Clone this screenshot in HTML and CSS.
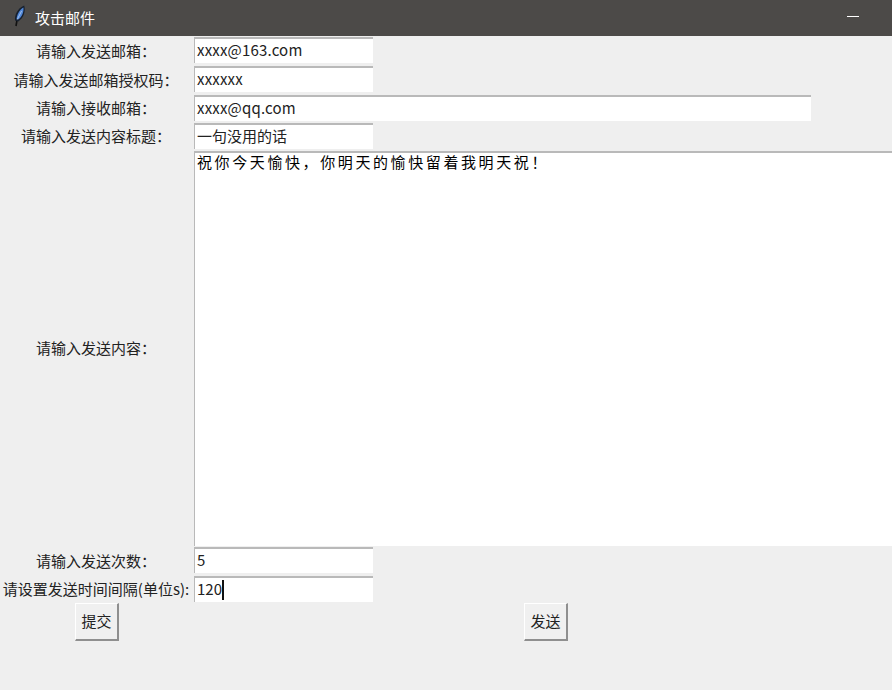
FILE: index.html
```html
<!DOCTYPE html>
<html lang="zh">
<head>
<meta charset="utf-8">
<title>攻击邮件</title>
<link rel="stylesheet" href="styles.css">
</head>
<body>
<header class="titlebar">
  <svg class="feather" width="12" height="22" viewBox="0 0 12 22" aria-hidden="true">
    <path d="M2 21 L3.2 14" stroke="#111" stroke-width="1.6" fill="none"/>
    <path d="M1 15.5 C.4 10 3.6 3.4 10.2 .6 C11.8 6 9.8 13 4.4 16.4 Z" fill="#16202f"/>
    <path d="M2.6 14 C2.8 10 5.2 5 9.4 2.4 C10 7 8 11.6 4.2 14.6 Z" fill="#4f86d8"/>
    <path d="M3.2 14.5 L7.6 6" stroke="#c9d8ee" stroke-width=".7" fill="none"/>
  </svg>
  <span class="title">攻击邮件</span>
  <span class="minimize"></span>
</header>
<main class="form">
  <label class="label">请输入发送邮箱：</label>
  <div class="entry short latin">xxxx@163.com</div>
  <label class="label">请输入发送邮箱授权码：</label>
  <div class="entry short latin">xxxxxx</div>
  <label class="label">请输入接收邮箱：</label>
  <div class="entry wide latin">xxxx@qq.com</div>
  <label class="label">请输入发送内容标题：</label>
  <div class="entry short">一句没用的话</div>
  <label class="label">请输入发送内容：</label>
  <div class="textbox">祝你今天愉快，你明天的愉快留着我明天祝！</div>
  <label class="label">请输入发送次数：</label>
  <div class="entry short">5</div>
  <label class="label">请设置发送时间间隔(单位s):</label>
  <div class="entry short">120<span class="caret"></span></div>
</main>
<footer class="actions">
  <button class="btn">提交</button>
  <button class="btn">发送</button>
</footer>
</body>
</html>
```
FILE: styles.css
```css
* { box-sizing: border-box; }
html, body { margin: 0; height: 100%; }
body {
  width: 892px;
  height: 690px;
  overflow: hidden;
  background: #efefef;
  font-family: "Noto Sans CJK SC", "Liberation Sans", sans-serif;
  font-size: 15px;
  color: #222;
}
.titlebar {
  height: 36px;
  background: #4c4a48;
  color: #fff;
  display: flex;
  align-items: center;
  padding-left: 14px;
}
.feather { margin-right: 9px; flex: none; position: relative; top: -2px; }
.title { font-size: 15px; position: relative; top: -1px; }
.minimize {
  margin-left: auto;
  margin-right: 33px;
  width: 12px;
  height: 1px;
  background: #fff;
  position: relative;
  top: -2px;
}
.form {
  display: grid;
  grid-template-columns: 194px 1fr;
  grid-template-rows: 29px 29px 28px 28px 396px 29px 27px;
  padding-top: 1px;
}
.label {
  display: flex;
  align-items: center;
  justify-content: center;
  white-space: nowrap;
  padding: 0 2px 3px 0;
  line-height: 1;
}
.entry {
  background: #fff;
  border-top: 2px solid #b9b9b9;
  border-left: 1px solid #b9b9b9;
  padding: 0 0 3px 2px;
  height: 26px;
  display: flex;
  align-items: center;
  font-size: 15px;
  line-height: 1;
  color: #222;
}
.latin { letter-spacing: .18px; }
.short { width: 179px; }
.wide { width: 617px; }
.textbox {
  background: #fff;
  border-top: 2px solid #b9b9b9;
  border-left: 1px solid #b9b9b9;
  padding-left: 2px;
  height: 395px;
  font-size: 15px;
  letter-spacing: 2.6px;
  line-height: 18px;
  color: #000;
  white-space: nowrap;
}
.caret {
  display: inline-block;
  width: 2px;
  height: 20px;
  background: #111;
  position: relative;
  top: 1px;
}
.actions {
  display: flex;
  gap: 405px;
  padding-left: 75px;
}
.btn {
  width: 44px;
  height: 38px;
  padding: 0 0 2px;
  margin: 0;
  background: #f0f0f0;
  border: 1px solid #fff;
  border-right: 2px solid #8f8f8f;
  border-bottom: 2px solid #8f8f8f;
  font: inherit;
  color: #222;
}
```
